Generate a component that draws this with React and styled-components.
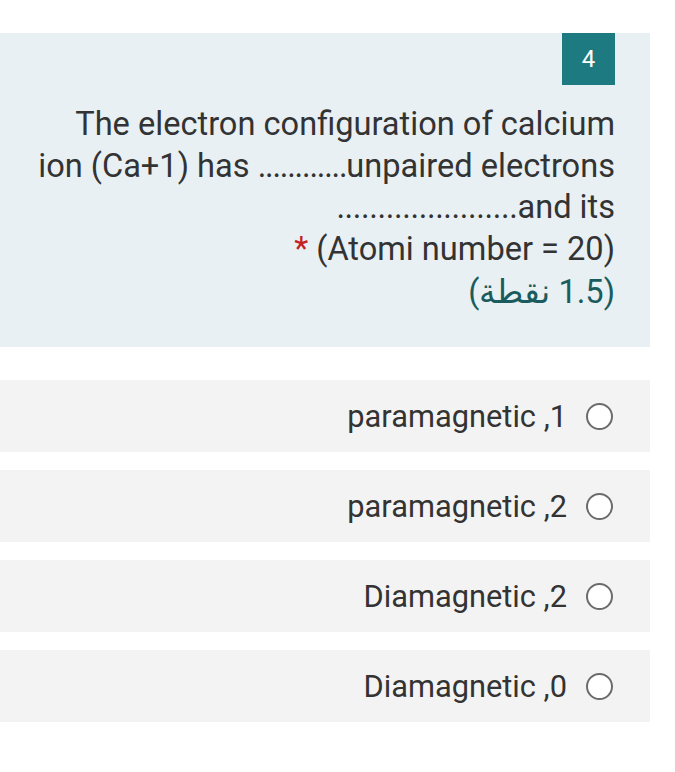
import React from "react";
import styled, { createGlobalStyle } from "styled-components";

const GlobalStyle = createGlobalStyle`
  body {
    margin: 0;
    background: #ffffff;
    font-family: Roboto, "Noto Sans", sans-serif;
  }
`;

const Page = styled.div`
  width: 675px;
  padding-top: 33px;
`;

const QuestionCard = styled.div`
  width: 650px;
  height: 314px;
  box-sizing: border-box;
  background: #e8f0f3;
  display: flex;
  flex-direction: column;
  align-items: flex-end;
  padding-right: 35px;
`;

const Badge = styled.div`
  width: 53px;
  height: 52px;
  background: #1d7a80;
  color: #ffffff;
  font-size: 24px;
  display: flex;
  align-items: center;
  justify-content: center;
`;

const QuestionText = styled.div`
  margin-top: 19px;
  font-size: 32.6px;
  line-height: 41.5px;
  color: #333333;
  text-align: right;
`;

const Line = styled.div`
  white-space: nowrap;
`;

const Blank = styled.span`
  letter-spacing: ${(p) => p.$tight}px;
`;

const Required = styled.span`
  color: #c5221f;
`;

const Points = styled.div`
  color: #1a5c5e;
  margin-top: 2px;
`;

const OptionList = styled.div`
  margin-top: 33px;
  display: flex;
  flex-direction: column;
  gap: 18px;
`;

const Option = styled.label`
  width: 650px;
  height: 72px;
  background: #f3f3f3;
  display: flex;
  flex-direction: row-reverse;
  align-items: center;
  box-sizing: border-box;
  padding-right: 37px;
  gap: 19px;
  font-size: 30.8px;
  color: #333333;
`;

const Radio = styled.span`
  width: 23px;
  height: 23px;
  border-radius: 50%;
  border: 2px solid #6b6b6b;
  background: #ffffff;
  flex-shrink: 0;
`;

const options = ["paramagnetic ,1", "paramagnetic ,2", "Diamagnetic ,2", "Diamagnetic ,0"];

const App = () => {
  return (
    <Page>
      <GlobalStyle />
      <QuestionCard>
        <Badge>4</Badge>
        <QuestionText>
          <Line>The electron configuration of calcium</Line>
          <Line>
            ion (Ca+1) has <Blank $tight={-1.2}>............</Blank>unpaired electrons
          </Line>
          <Line>
            <Blank $tight={-0.36}>......................</Blank>and its
          </Line>
          <Line>
            <Required>*</Required> (Atomi number = 20)
          </Line>
          <Points>
            <span dir="rtl">(1.5 نقطة)</span>
          </Points>
        </QuestionText>
      </QuestionCard>
      <OptionList>
        {options.map((o) => (
          <Option key={o}>
            <Radio />
            <span>{o}</span>
          </Option>
        ))}
      </OptionList>
    </Page>
  );
};

export default App;
